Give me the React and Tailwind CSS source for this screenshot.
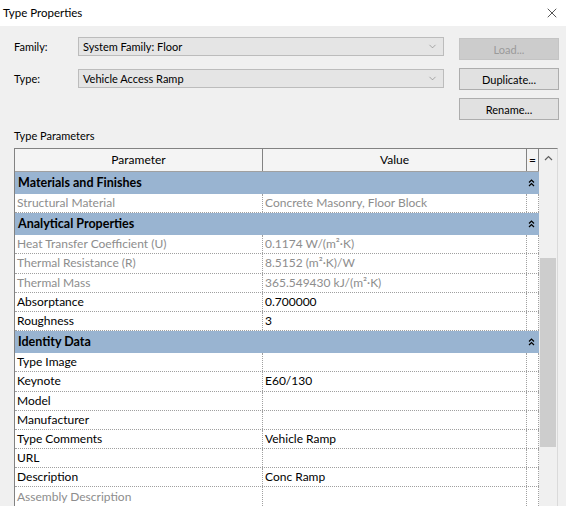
import { X, ChevronDown } from 'lucide-react';

const ROWS = [
  { section: 'Materials and Finishes' },
  { name: 'Structural Material', value: 'Concrete Masonry, Floor Block', dim: true },
  { section: 'Analytical Properties' },
  { name: 'Heat Transfer Coefficient (U)', value: '0.1174 W/(m²·K)', dim: true },
  { name: 'Thermal Resistance (R)', value: '8.5152 (m²·K)/W', dim: true },
  { name: 'Thermal Mass', value: '365.549430 kJ/(m²·K)', dim: true },
  { name: 'Absorptance', value: '0.700000' },
  { name: 'Roughness', value: '3' },
  { section: 'Identity Data' },
  { name: 'Type Image', value: '' },
  { name: 'Keynote', value: 'E60/130' },
  { name: 'Model', value: '' },
  { name: 'Manufacturer', value: '' },
  { name: 'Type Comments', value: 'Vehicle Ramp' },
  { name: 'URL', value: '' },
  { name: 'Description', value: 'Conc Ramp' },
  { name: 'Assembly Description', value: '', dim: true },
];

const Collapse = () => (
  <svg width="7" height="8" viewBox="0 0 7 8" className="text-black">
    <path d="M1 3.5 L3.5 1 L6 3.5 M1 7 L3.5 4.5 L6 7" fill="none" stroke="currentColor" strokeWidth="1.2" />
  </svg>
);

const Combo = ({ text }) => (
  <div className="flex items-center justify-between w-[366px] h-[19px] bg-[#e5e5e5] border border-[#bcbcbc] pl-[4px] pr-[5px]">
    <span>{text}</span>
    <ChevronDown size={11} strokeWidth={1.2} className="text-[#707070]" />
  </div>
);

const Button = ({ label, disabled }) => (
  <div
    className={`flex items-center justify-center w-[100px] h-[22px] border ${
      disabled ? 'bg-[#cccccc] border-[#c4c4c4] text-[#9a9a9a]' : 'bg-[#e1e1e1] border-[#adadad] text-black'
    }`}
  >
    {label}
  </div>
);

export default function App() {
  return (
    <div className="w-[566px] h-[506px] overflow-hidden bg-[#f0f0f0] font-[Lato,sans-serif] text-[12px] text-black leading-none">
      {/* title bar */}
      <div className="flex items-center justify-between h-[26px] bg-white pl-[3px] pr-[6px]">
        <span className="text-[11.5px]">Type Properties</span>
        <X size={16} strokeWidth={1} />
      </div>

      {/* family / type */}
      <div className="flex pl-[14px] pr-[7px] pt-[11px] text-[11px]">
        <div className="flex flex-col gap-[13px]">
          <div className="flex items-center">
            <span className="w-[64px]">Family:</span>
            <Combo text="System Family: Floor" />
          </div>
          <div className="flex items-center">
            <span className="w-[64px]">Type:</span>
            <Combo text="Vehicle Access Ramp" />
          </div>
        </div>
        <div className="flex flex-col gap-[8px] ml-[15px] pt-[1px]">
          <Button label="Load..." disabled />
          <Button label="Duplicate..." />
          <Button label="Rename..." />
        </div>
      </div>

      <div className="pl-[14px] pt-[3px] h-[28px] text-[11px] flex items-center">Type Parameters</div>

      {/* table */}
      <div className="ml-[14px] w-[544px] flex border-l border-t border-r border-[#828282] border-r-[#dadada]">
        <div className="w-[524px] flex flex-col">
          <div className="flex h-[23px] bg-[#f4f4f4] border-b border-[#a0a0a0]">
            <div className="w-[248px] flex items-center justify-center border-r border-[#828282]">Parameter</div>
            <div className="w-[264px] flex items-center justify-center border-r border-[#828282]">Value</div>
            <div className="w-[12px] flex items-center justify-center border-r border-[#828282]">=</div>
          </div>
          {ROWS.map((r, i) =>
            r.section ? (
              <div key={i} className="flex items-center justify-between h-[22px] shrink-0 bg-[#99b4d1] pl-[3px] pr-[4px] font-bold text-[12.5px]">
                <span>{r.section}</span>
                <Collapse />
              </div>
            ) : (
              <div
                key={i}
                className={`flex h-[19.2px] shrink-0 border-b border-dotted border-[#a0a0a0] bg-white ${r.dim ? 'text-[#8d8d8d]' : 'text-black'}`}
              >
                <div className="w-[248px] flex items-center pl-[2px] border-r border-dotted border-[#a0a0a0]">{r.name}</div>
                <div className="w-[264px] flex items-center pl-[2px] border-r border-dotted border-[#a0a0a0]">{r.value}</div>
                <div className="w-[12px] border-r border-dotted border-[#a0a0a0]" />
              </div>
            )
          )}
        </div>
        {/* scrollbar */}
        <div className="w-[18px] flex flex-col items-center">
          <div className="h-[17px] flex items-center justify-center">
            <svg width="9" height="6" viewBox="0 0 9 6">
              <path d="M1 5 L4.5 1.5 L8 5" fill="none" stroke="#606060" strokeWidth="1.2" />
            </svg>
          </div>
          <div className="h-[92px]" />
          <div className="w-[16px] h-[189px] bg-[#cdcdcd]" />
        </div>
      </div>
    </div>
  );
}
